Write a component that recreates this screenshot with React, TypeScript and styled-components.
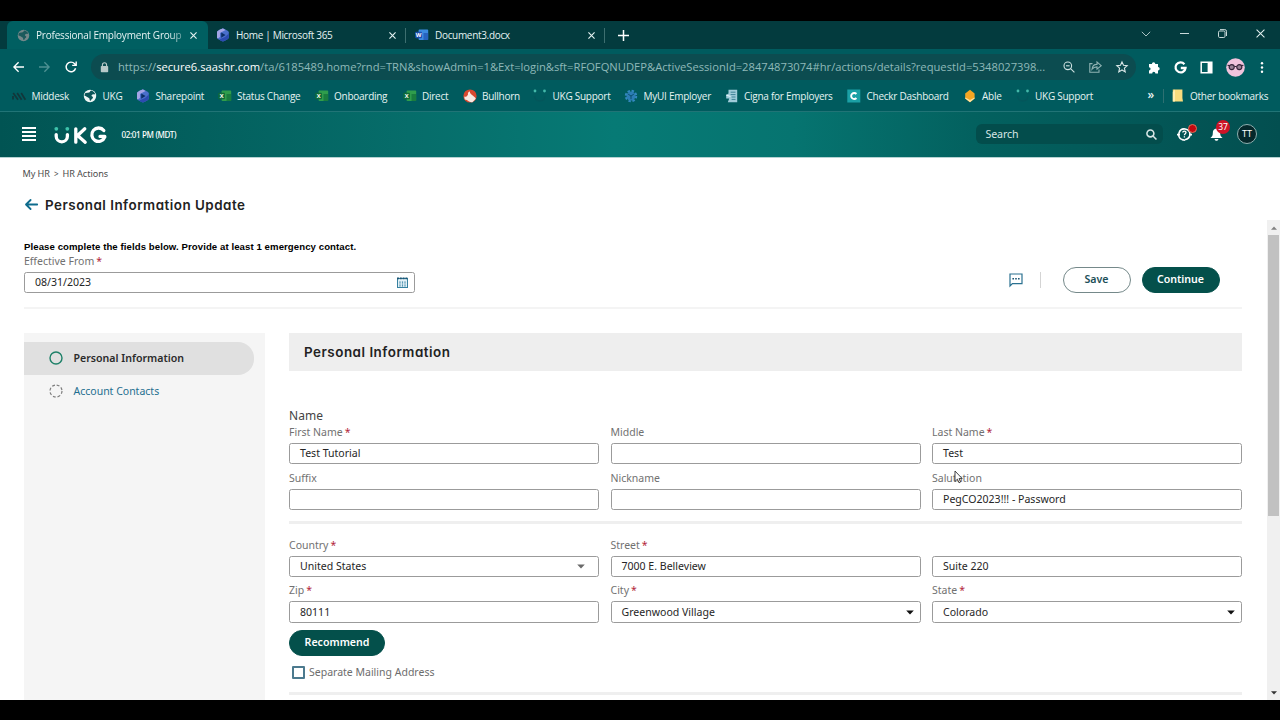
import React from "react";
import styled, { createGlobalStyle, css } from "styled-components";

const GlobalStyle = createGlobalStyle`
  * { box-sizing: border-box; }
  html, body { margin: 0; padding: 0; background: #000; }
  body { width: 1280px; height: 720px; overflow: hidden; font-family: "Noto Sans", sans-serif; }
  svg { display: block; flex: none; overflow: visible; }
`;

const chromeFont = `"Open Sans", "Noto Sans", sans-serif`;

const Screen = styled.div`
  width: 1280px;
  height: 720px;
  padding: 21px 0 20px;
  background: #000;
  display: flex;
  flex-direction: column;
`;

/* ---------- text helper ---------- */
const Text = styled.span<{ $size: number; $ls?: number; $color?: string; $weight?: number }>`
  font-size: ${(p) => p.$size}px;
  letter-spacing: ${(p) => p.$ls ?? 0}px;
  color: ${(p) => p.$color ?? "inherit"};
  font-weight: ${(p) => p.$weight ?? 400};
  white-space: nowrap;
`;

/* ---------- browser chrome ---------- */
const TabStrip = styled.div`
  height: 28px;
  flex: none;
  display: flex;
  padding-left: 7px;
  background: #033b3e;
  color: #e4f2f2;
  font-family: ${chromeFont};
`;

const Tab = styled.div<{ $active?: boolean; $divided?: boolean }>`
  width: ${(p) => (p.$active ? 201 : 199)}px;
  height: 28px;
  padding: 0 11px 0 ${(p) => (p.$active ? 10 : 8)}px;
  display: flex;
  align-items: center;
  gap: 6px;
  position: relative;
  ${(p) => p.$active && css`background: #005f61; border-radius: 6px 6px 0 0;`}
  ${(p) =>
    p.$divided &&
    css`
      &::after {
        content: "";
        position: absolute;
        right: 1px;
        top: 7px;
        width: 1px;
        height: 15px;
        background: #3d6f70;
      }
    `}
`;

const TabTitle = styled(Text)<{ $fade?: boolean }>`
  flex: 1;
  ${(p) => p.$fade && css`mask-image: linear-gradient(90deg, #000 90%, rgba(0, 0, 0, 0.35) 100%);`}
`;

const NewTab = styled.div`
  display: flex;
  align-items: center;
  padding-left: 12px;
  flex: 1;
`;

const WindowButtons = styled.div`
  display: flex;
  align-items: center;
  gap: 29px;
  padding: 0 15px 3px 0;
`;

const Toolbar = styled.div`
  height: 34px;
  flex: none;
  display: flex;
  align-items: center;
  padding: 2px 14px 0 13px;
  background: #005b5e;
  color: #fff;
  font-family: ${chromeFont};
`;

const NavButtons = styled.div`
  width: 78px;
  display: flex;
  gap: 15px;
`;

const AddressBar = styled.div`
  width: 1045px;
  height: 26px;
  border-radius: 13px;
  padding: 0 8px 0 9px;
  display: flex;
  align-items: center;
  background: #0c4c50;
  color: #8fb9b9;
`;

const Url = styled(Text)`
  margin-left: 9px;
  flex: 1;
  line-height: 16px;
  padding-bottom: 1px;
  b { font-weight: 400; color: #fff; }
`;

const AddressIcons = styled.div`
  display: flex;
  align-items: center;
  gap: 14px;
  color: #cfe2e2;
`;

const Extensions = styled.div`
  flex: 1;
  display: flex;
  align-items: center;
  gap: 13px;
  padding-left: 12.5px;
`;

const BookmarkBar = styled.div`
  height: 29px;
  flex: none;
  display: flex;
  align-items: center;
  padding: 0 0 3px 12px;
  border-bottom: 1px solid #217476;
  background: #005b5e;
  color: #e6f3f2;
  font-family: ${chromeFont};
`;

const Bookmark = styled.div<{ $w: number }>`
  width: ${(p) => p.$w}px;
  flex: none;
  display: flex;
  align-items: center;
  gap: 5.5px;
`;

const Overflow = styled.div`
  width: 16px;
  border-right: 1px solid #2d7072;
  height: 14px;
  line-height: 12px;
  display: flex;
  margin-right: 8px;
`;

/* ---------- application header ---------- */
const AppHeader = styled.header`
  height: 45px;
  flex: none;
  display: flex;
  align-items: center;
  padding: 0 23px 1px 22px;
  background: linear-gradient(90deg, #015453 0%, #03605e 16%, #066d6a 32%, #067a75 48%, #067470 62%, #03615f 76%, #034f50 100%);
  color: #fff;
`;

const Logo = styled.svg`margin: 3px 15px 0 17.5px;`;

const SearchBox = styled.div`
  margin-left: auto;
  width: 187px;
  height: 20px;
  border-radius: 6px;
  background: #034d4c;
  display: flex;
  align-items: center;
  justify-content: space-between;
  padding: 0 6px 0 10px;
  color: #d7e6e5;
`;

const HeaderIcon = styled.div<{ $ml: number }>`
  position: relative;
  margin-left: ${(p) => p.$ml}px;
`;

const Dot = styled.span`
  position: absolute;
  top: -3px;
  right: -5px;
  width: 9px;
  height: 9px;
  border-radius: 50%;
  background: #c2080f;
  border: 1px solid #e0705c;
`;

const Count = styled.span`
  position: absolute;
  top: -7px;
  right: -7px;
  width: 14px;
  height: 14px;
  border-radius: 50%;
  background: #cd1427;
  font-size: 8.5px;
  line-height: 14px;
  text-align: center;
`;

const Avatar = styled.div`
  margin-left: 14px;
  width: 20px;
  height: 20px;
  border-radius: 50%;
  border: 1px solid #8fb0b0;
  background: #05282b;
  font-size: 9px;
  line-height: 17px;
  text-align: center;
`;

/* ---------- page ---------- */
const Page = styled.main`
  flex: 1;
  min-height: 0;
  background: #fff;
  border-top: 1px solid #b5d2d2;
  display: flex;
  flex-direction: column;
`;

const Breadcrumb = styled.nav`
  height: 31px;
  padding: 0 0 0 22.5px;
  display: flex;
  align-items: center;
  gap: 4px;
  color: #4c4c4c;
  flex: none;
`;

const TitleRow = styled.div`
  height: 31px;
  flex: none;
  display: flex;
  align-items: center;
  gap: 7px;
  padding: 0 0 0 25px;
`;

const Heading = styled.h1<{ $size: number; $ls: number }>`
  margin: 0;
  font-family: Inter, sans-serif;
  font-feature-settings: "cv11", "ss03";
  font-weight: 600;
  font-size: ${(p) => p.$size}px;
  letter-spacing: ${(p) => p.$ls}px;
  line-height: 20px;
  color: #222;
  white-space: nowrap;
`;

const ScrollPane = styled.div`
  flex: 1;
  min-height: 0;
  display: flex;
`;

const PaneBody = styled.div`
  flex: 1;
  min-width: 0;
  padding: 0 25px 0 24px;
  display: flex;
  flex-direction: column;
  overflow: hidden;
`;

const ScrollTrack = styled.div`
  width: 13px;
  background: #f0f0f0;
  display: flex;
  flex-direction: column;
  align-items: center;
`;

const ScrollArrow = styled.div`
  height: 15px;
  display: flex;
  align-items: center;
`;

const ScrollThumb = styled.div`
  width: 11px;
  height: 281px;
  background: #c1c1c1;
  margin-bottom: auto;
`;

const ActionRow = styled.div`
  height: 89px;
  flex: none;
  display: flex;
  justify-content: space-between;
  border-bottom: 2px solid #f4f4f4;
  padding-right: 22.5px;
`;

const EffectiveBlock = styled.div`
  width: 391px;
  padding-top: 18px;
`;

const Notice = styled.div`
  font-family: "Liberation Sans", sans-serif;
  font-weight: 700;
  font-size: 9.6px;
  letter-spacing: 0.08px;
  line-height: 16px;
  height: 17px;
  padding-top: 1px;
  color: #000;
  white-space: nowrap;
`;

const Actions = styled.div`
  display: flex;
  align-items: center;
  padding-top: 32px;
`;

const ActionDivider = styled.div`
  width: 1px;
  height: 16px;
  background: #d4d4d4;
  margin: 0 22px 0 17px;
`;

const ButtonPair = styled.div`
  display: flex;
  gap: 11px;
`;

const Pill = styled.div<{ $w: number; $outline?: boolean }>`
  width: ${(p) => p.$w}px;
  height: 26px;
  border-radius: 13px;
  border: 1px solid ${(p) => (p.$outline ? "#75898a" : "#04504b")};
  background: ${(p) => (p.$outline ? "#fff" : "#04504b")};
  color: ${(p) => (p.$outline ? "#1d5059" : "#fff")};
  display: flex;
  align-items: center;
  justify-content: center;
  font-size: 10.6px;
  font-weight: 600;
  line-height: 24px;
  padding-bottom: 2px;
  flex: none;
`;

const Columns = styled.div`
  flex: 1;
  min-height: 0;
  display: flex;
  gap: 24px;
  padding-top: 24px;
`;

const SideNav = styled.aside`
  width: 241px;
  background: #f5f5f5;
  padding-top: 9px;
`;

const SideItem = styled.div<{ $active?: boolean }>`
  width: 230px;
  height: 33px;
  padding: 0 0 1px 24.5px;
  display: flex;
  align-items: center;
  gap: 11px;
  ${(p) => p.$active && css`background: #e0e0e0; border-radius: 0 16px 16px 0;`}
`;

const Form = styled.section`
  flex: 1;
  min-width: 0;
`;

const SectionBar = styled.div`
  height: 38px;
  background: #eee;
  padding: 9px 0 0 15px;
`;

const GroupTitle = styled.div`
  margin-top: 36px;
  height: 18px;
  line-height: 18px;
  font-size: 12px;
  letter-spacing: 0.05px;
  color: #444;
`;

const FieldGrid = styled.div<{ $gap: number }>`
  display: grid;
  grid-template-columns: repeat(3, 310px);
  column-gap: 11.5px;
  row-gap: ${(p) => p.$gap}px;
`;

const Label = styled.div<{ $h?: number; $lh?: number }>`
  height: ${(p) => p.$h ?? 18}px;
  line-height: ${(p) => p.$lh ?? 15}px;
  font-size: 10.5px;
  color: #717171;
  white-space: nowrap;
`;

const Star = styled.span`
  margin-left: 2px;
  color: #b3263a;
`;

const Box = styled.div<{ $pr?: number; $tall?: boolean }>`
  height: ${(p) => (p.$tall ? 22 : 21)}px;
  border: 1px solid #9b9b9b;
  border-radius: 2.5px;
  background: #fff;
  padding: 0 ${(p) => p.$pr ?? 6}px 0 10px;
  display: flex;
  align-items: center;
  justify-content: space-between;
  font-size: 10.55px;
  line-height: 19px;
  color: #262626;
  white-space: nowrap;
`;

const Rule = styled.div<{ $mt: number; $mb: number }>`
  height: 3px;
  background: #efefef;
  margin: ${(p) => p.$mt}px 0 ${(p) => p.$mb}px;
`;

const FormFooter = styled.div`
  padding-top: 7px;
`;

const CheckRow = styled.div`
  display: flex;
  align-items: center;
  gap: 4px;
  height: 20px;
  margin: 6px 0 0 3px;
`;

const Checkbox = styled.span`
  width: 13px;
  height: 13px;
  border: 2px solid #4c7a8e;
  border-radius: 1px;
`;

const Pointer = styled.svg`
  position: absolute;
  left: 954px;
  top: 470px;
`;

/* ---------- icons ---------- */
const CloseIcon = ({ s = 7, w = 1.3 }: { s?: number; w?: number }) => (
  <svg width={s} height={s} viewBox="0 0 8 8" stroke="currentColor" strokeWidth={w}>
    <path d="M0.5 .5L7.5 7.5M7.5 .5L.5 7.5" />
  </svg>
);

const Globe = ({ size, fg, bg }: { size: number; fg: string; bg: string }) => (
  <svg width={size} height={size} viewBox="0 0 14 14">
    <circle cx="7" cy="7" r="6.2" fill={bg} />
    <path d="M2 4.5C3.6 3.2 5 4 6.2 3.6 7.5 3 6.6 2 8.2 1.6 10.8 2.3 12 4 12.2 5.4 10.5 5 9.2 5.2 8.6 6.2 8 7.4 9.8 7.2 10 8.4 10 9.6 8.4 9.6 8.2 11 7.6 12.4 6.4 11.6 6.6 10.2 6.8 8.8 5.2 9 4.2 8 3.2 7.2 1.8 7 1.4 6.6Z" fill={fg} />
  </svg>
);

const Microsoft365 = ({ size = 13 }: { size?: number }) => (
  <svg width={size} height={size} viewBox="0 0 14 14">
    <path d="M7 .6C8 .6 12.8 3.2 12.8 4.2V9.8C12.8 11 8 13.4 7 13.4C6 13.4 1 11 1 9.8V4.2C1 3.2 6 .6 7 .6Z" fill="#4a6fcb" />
    <path d="M7 .6C5.4 .6 1 3 1 4.2V9.8C1 10.8 2.4 10.4 4 9V5L9.6 2Z" fill="#a3a4e6" />
    <path d="M12.8 5.5V9.8C12.8 11 8 13.4 7 13.4C6 13.4 4.2 12.4 3.2 11.4L9 9Z" fill="#2c4bb0" />
    <path d="M5.2 4.4L9.6 7L5.2 9.8Z" fill="#0d2f66" />
  </svg>
);

const OfficeFile = ({ letter, dark, light }: { letter: string; dark: string; light: string }) => (
  <svg width="14" height="14" viewBox="0 0 14 14">
    <rect x="3.6" y="1.6" width="9.6" height="10.4" rx="0.8" fill={light} />
    <rect x="8.5" y="5" width="4.7" height="7" fill={dark} opacity="0.65" />
    <rect x="0.3" y="3.7" width="6.6" height="6.6" rx="0.8" fill={dark} />
    <text x="3.6" y="9.1" fontSize="5.8" fontWeight="700" fontFamily="Open Sans, sans-serif" fill="#fff" textAnchor="middle">{letter}</text>
  </svg>
);

const MiddeskIcon = () => (
  <svg width="14" height="14" viewBox="0 0 14 14" stroke="#12363a" strokeWidth="1.7" fill="none">
    <path d="M1 7V10.5M1.2 4L6 10.8M5.2 4L9.6 10.8M9.2 4L13.4 10.8" />
  </svg>
);

const BullhornIcon = () => (
  <svg width="14" height="14" viewBox="0 0 14 14">
    <circle cx="7" cy="7" r="6.6" fill="#d9482f" />
    <path d="M1.2 7.6C3 8.4 4 7.2 5 5.4C4.6 4 5.4 2.8 7 2.6C6.6 4.4 8 5 9 6C10.4 7.2 12 8 12.8 9.8L9.4 13.2C6 13.8 5.4 11 1.8 10.6Z" fill="#f8e9e2" />
  </svg>
);

const DotsIcon = () => (
  <svg width="14" height="14" viewBox="0 0 14 14" fill="#43b8a9">
    <circle cx="2" cy="2" r="1.4" />
    <circle cx="11.5" cy="2" r="1.4" />
    <path d="M1.5 7C2 13.5 11.5 13.5 12 7" fill="none" stroke="#04565b" strokeWidth="1.4" />
  </svg>
);

const GearIcon = () => (
  <svg width="14" height="14" viewBox="0 0 14 14">
    <circle cx="7" cy="7" r="5.2" fill="none" stroke="#3489c1" strokeWidth="2" strokeDasharray="2.4 1.68" />
    <circle cx="7" cy="7" r="4.5" fill="#2c7db5" />
    <path d="M4.2 5.2L7 7L9.8 5.2M7 7V10.2" stroke="#0a4f6e" strokeWidth="1" fill="none" />
  </svg>
);

const CignaIcon = () => (
  <svg width="14" height="14" viewBox="0 0 14 14">
    <path d="M3.5 .8H12.2V13.2H2.8L4.2 9.5H1.2V6L3.5 4.5Z" fill="#9fcbd9" />
    <path d="M5.6 3.2H10.5M5.6 5.6H10.5M6.6 8H10.5M6.6 10.4H10.5" stroke="#3d8196" strokeWidth="1" />
    <path d="M1.2 6L5.5 7.5" stroke="#dff2f7" strokeWidth="1.2" />
  </svg>
);

const CheckrIcon = () => (
  <svg width="14" height="14" viewBox="0 0 14 14">
    <rect x=".3" y=".5" width="13" height="13" fill="#1ba0a5" />
    <path d="M9.4 5A3 3 0 1 0 9.4 9" fill="none" stroke="#fff" strokeWidth="1.9" />
  </svg>
);

const AbleIcon = () => (
  <svg width="14" height="14" viewBox="0 0 14 14">
    <path d="M7 .8L11.6 4.6V9.4L7 13.2L2.2 9.4V4.6Z" fill="#f6a623" />
    <path d="M2.2 8.6L7 11L11.6 8.6V9.6L7 13.2L2.2 9.6Z" fill="#ffe2a0" />
  </svg>
);

const SearchGlyph = ({ size = 12, w = 1.4, minus = false }: { size?: number; w?: number; minus?: boolean }) => (
  <svg width={size} height={size} viewBox="0 0 12 12" fill="none" stroke="currentColor" strokeWidth={w}>
    <circle cx="4.8" cy="4.8" r="3.8" />
    <path d="M7.6 7.6L11.4 11.4" />
    {minus && <path d="M3 4.8H6.6" />}
  </svg>
);

const CaretDown = ({ color }: { color: string }) => (
  <svg width="8" height="5" viewBox="0 0 8 5">
    <path d="M.2 .5H7.8L4 4.5Z" fill={color} />
  </svg>
);

const bookmarks: { label: string; w: number; ls?: number; icon: React.ReactNode }[] = [
  { label: "Middesk", w: 71, icon: <MiddeskIcon /> },
  { label: "UKG", w: 53, icon: <Globe size={14} fg="#0b5558" bg="#eef6f5" /> },
  { label: "Sharepoint", w: 81.5, icon: <Microsoft365 size={14} /> },
  { label: "Status Change", w: 97, icon: <OfficeFile letter="X" dark="#0f6b38" light="#2f9d4c" /> },
  { label: "Onboarding", w: 88, icon: <OfficeFile letter="X" dark="#0f6b38" light="#2f9d4c" /> },
  { label: "Direct", w: 60, icon: <OfficeFile letter="X" dark="#0f6b38" light="#2f9d4c" /> },
  { label: "Bullhorn", w: 70.5, icon: <BullhornIcon /> },
  { label: "UKG Support", w: 91, icon: <DotsIcon /> },
  { label: "MyUI Employer", w: 100.5, icon: <GearIcon /> },
  { label: "Cigna for Employers", w: 122.5, icon: <CignaIcon /> },
  { label: "Checkr Dashboard", w: 115.5, icon: <CheckrIcon /> },
  { label: "Able", w: 53, icon: <AbleIcon /> },
  { label: "UKG Support", w: 132, icon: <DotsIcon /> },
];

type FieldProps = { label?: string; required?: boolean; value?: string; caret?: string; pr?: number; tall?: boolean };

const Field = ({ label, required, value, caret, pr, tall }: FieldProps) => (
  <div>
    <Label>
      {label}
      {required && <Star>*</Star>}
    </Label>
    <Box $pr={pr} $tall={tall}>
      <span>{value}</span>
      {caret && <CaretDown color={caret} />}
    </Box>
  </div>
);

const BrowserChrome = () => (
  <>
    <TabStrip>
      <Tab $active>
        <Globe size={13} fg="#1b5a5c" bg="#74888a" />
        <TabTitle $size={10} $ls={-0.2} $fade>Professional Employment Group</TabTitle>
        <CloseIcon />
      </Tab>
      <Tab $divided>
        <Microsoft365 size={14} />
        <TabTitle $size={10} $ls={-0.32}>Home | Microsoft 365</TabTitle>
        <CloseIcon />
      </Tab>
      <Tab $divided>
        <OfficeFile letter="W" dark="#1b4fae" light="#3c8be0" />
        <TabTitle $size={10} $ls={-0.32}>Document3.docx</TabTitle>
        <CloseIcon />
      </Tab>
      <NewTab>
        <svg width="11" height="11" viewBox="0 0 11 11" stroke="#fff" strokeWidth="1.5"><path d="M5.5 0V11M0 5.5H11" /></svg>
      </NewTab>
      <WindowButtons>
        <svg width="10" height="6" viewBox="0 0 10 6" fill="none" stroke="#a9c2c3" strokeWidth="1"><path d="M.8 .8L5 5L9.2 .8" /></svg>
        <svg width="9" height="2" viewBox="0 0 9 2" stroke="#c9dada" strokeWidth="1"><path d="M0 .5H9" /></svg>
        <svg width="9" height="9" viewBox="0 0 9 9" fill="none" stroke="#c9dada" strokeWidth="1">
          <rect x=".5" y="2" width="6.5" height="6.5" rx="1.2" /><path d="M2 .6H6.8A1.7 1.7 0 0 1 8.5 2.3V7" />
        </svg>
        <CloseIcon s={9} w={0.9} />
      </WindowButtons>
    </TabStrip>
    <Toolbar>
      <NavButtons>
        <svg width="11" height="12" viewBox="0 0 11 12" fill="none" stroke="#fff" strokeWidth="1.3"><path d="M11 6H1M5.6 1.2L.9 6L5.6 10.8" /></svg>
        <svg width="11" height="12" viewBox="0 0 11 12" fill="none" stroke="#4d9193" strokeWidth="1.3"><path d="M0 6H10M5.4 1.2L10.1 6L5.4 10.8" /></svg>
        <svg width="12" height="12" viewBox="0 0 12 12" fill="none" stroke="#fff" strokeWidth="1.4"><path d="M10.6 7.2A4.8 4.8 0 1 1 9.6 2.8L11 4.2M11.2 .4V4.4H7.2" /></svg>
      </NavButtons>
      <AddressBar>
        <svg width="9" height="11" viewBox="0 0 9 11"><rect x=".8" y="4" width="7.4" height="6.2" rx=".8" fill="#b9c9c9" /><path d="M2.4 4.4V2.9A2.1 2.1 0 0 1 6.6 2.9V4.4" fill="none" stroke="#b9c9c9" strokeWidth="1.1" /></svg>
        <Url $size={11.2}>
          https://<b>secure6.saashr.com</b>/ta/6185489.home?rnd=TRN&amp;showAdmin=1&amp;Ext=login&amp;sft=RFOFQNUDEP&amp;ActiveSessionId=28474873074#hr/actions/details?requestId=5348027398...
        </Url>
        <AddressIcons>
          <SearchGlyph size={12} w={1.1} minus />
          <svg width="13" height="12" viewBox="0 0 13 12" fill="none" stroke="#8fb3b3" strokeWidth="1.1"><path d="M3.5 2.6H.8V11.2H10V8.6M3 8.2C3.4 5 5.6 3.4 8 3.4V1L12.2 4.7L8 8.2V5.9C6 5.9 4.4 6.4 3 8.2Z" /></svg>
          <svg width="12" height="12" viewBox="0 0 12 12" fill="none" stroke="#dce9e9" strokeWidth="1.1"><path d="M6 .9L7.5 4.3L11.2 4.7L8.4 7.2L9.2 10.9L6 9L2.8 10.9L3.6 7.2L.8 4.7L4.5 4.3Z" /></svg>
        </AddressIcons>
      </AddressBar>
      <Extensions>
        <svg width="13" height="13" viewBox="0 0 13 13" fill="#fff"><path d="M1 3H3.9A1.7 1.7 0 1 1 7.3 3H10V6A1.7 1.7 0 1 1 10 9.4V12.4H7.4A1.6 1.6 0 0 0 4.2 12.4H1V9.4A1.6 1.6 0 0 0 1 6.2Z" /></svg>
        <svg width="13" height="13" viewBox="0 0 13 13" fill="none" stroke="#fff" strokeWidth="2.3"><path d="M10.4 3.2A5 5 0 1 0 11.5 7H6.8" /></svg>
        <svg width="13" height="13" viewBox="0 0 13 13"><path d="M1.2 1.2H11.8V11.8H1.2Z" fill="none" stroke="#fff" strokeWidth="1.5" /><rect x="7.6" y="1" width="4.4" height="11" fill="#fff" /></svg>
        <svg width="19" height="19" viewBox="0 0 20 20">
          <circle cx="10" cy="10" r="9.8" fill="#f0c3dc" />
          <circle cx="6" cy="9.6" r="2.7" fill="#9a8296" stroke="#35243a" strokeWidth="1.2" />
          <circle cx="14" cy="9.6" r="2.7" fill="#9a8296" stroke="#35243a" strokeWidth="1.2" />
          <path d="M1.6 7.6L4 8M18.4 7.6L16 8M8.8 9H11.2" stroke="#35243a" strokeWidth="1.2" />
        </svg>
        <svg width="8" height="13" viewBox="0 0 8 13" fill="#fff"><circle cx="4" cy="2.2" r="1.2" /><circle cx="4" cy="6.5" r="1.2" /><circle cx="4" cy="10.8" r="1.2" /></svg>
      </Extensions>
    </Toolbar>
    <BookmarkBar>
      {bookmarks.map((b, i) => (
        <Bookmark key={i} $w={b.w}>
          {b.icon}
          <Text $size={10} $ls={-0.26}>{b.label}</Text>
        </Bookmark>
      ))}
      <Overflow><Text $size={12} $weight={600}>»</Text></Overflow>
      <Bookmark $w={100}>
        <svg width="13" height="13" viewBox="0 0 13 13"><path d="M.8 .5H10.4V9L11 12.5H.8Z" fill="#f9dc7d" /><path d="M.8 3L3 .5V12.5H.8Z" fill="#ffeeb0" /></svg>
        <Text $size={10} $ls={-0.26}>Other bookmarks</Text>
      </Bookmark>
    </BookmarkBar>
  </>
);

const Header = () => (
  <AppHeader>
    <svg width="14" height="14" viewBox="0 0 14 14" fill="#fff"><rect y="0" width="14" height="2" /><rect y="4" width="14" height="2" /><rect y="8" width="14" height="2" /><rect y="12" width="14" height="2" /></svg>
    <Logo width="53" height="18" viewBox="0 0 53 18" fill="none" stroke="#fff" strokeWidth="3.3" strokeLinecap="round" strokeLinejoin="round">
      <path d="M2.2 7.6V9.2A5.6 5.6 0 0 0 13.4 9.2V7.6" />
      <path d="M21.8 1.8V15.2M30.8 1.8L23.6 8.5L31.2 15.2" />
      <path d="M49.8 3.6A6.7 6.7 0 1 0 50.8 10V9.4H46" />
      <circle cx="2.3" cy="1.8" r="1.9" fill="#3ec3ab" stroke="none" />
      <circle cx="13.3" cy="1.8" r="1.9" fill="#3ec3ab" stroke="none" />
    </Logo>
    <Text $size={8.1} $ls={-0.38} $weight={500}>02:01 PM (MDT)</Text>
    <SearchBox>
      <Text $size={10.6} $ls={-0.1}>Search</Text>
      <SearchGlyph size={11} w={1.7} />
    </SearchBox>
    <HeaderIcon $ml={14}>
      <svg width="15" height="14" viewBox="0 0 15 14" fill="none" stroke="#fff" strokeWidth="1.6">
        <path d="M5 12.6A5.6 5.6 0 1 1 13 7.4C12.8 10 11 12 8 12.8" />
        <path d="M0 7.6H3M12 7.6H15M5 12.6L8 13.2" />
        <path d="M5.8 5.6C5.8 3.6 9 3.6 9 5.6C9 6.8 7.4 6.8 7.4 8.2M7.4 9.3V10.4" strokeWidth="1.3" />
      </svg>
      <Dot />
    </HeaderIcon>
    <HeaderIcon $ml={18.5}>
      <svg width="13" height="14" viewBox="0 0 13 14" fill="#fff"><path d="M6.5 1.6C9.2 2 10.2 3.6 10.2 6.2C10.2 8.8 11 9.6 12.6 11H.4C2 9.6 2.8 8.8 2.8 6.2C2.8 3.6 3.8 2 6.5 1.6ZM4.6 12H8.4C8.4 14.4 4.6 14.4 4.6 12Z" /></svg>
      <Count>37</Count>
    </HeaderIcon>
    <Avatar>TT</Avatar>
  </AppHeader>
);

const App = () => (
  <Screen>
    <GlobalStyle />
    <BrowserChrome />
    <Header />
    <Page>
      <Breadcrumb>
        <Text $size={9.1} $ls={-0.05}>My HR</Text>
        <Text $size={8}>&gt;</Text>
        <Text $size={9.1} $ls={-0.05}>HR Actions</Text>
      </Breadcrumb>
      <TitleRow>
        <svg width="13" height="11" viewBox="0 0 13 11" fill="none" stroke="#0f6c8d" strokeWidth="1.8" strokeLinecap="round" strokeLinejoin="round"><path d="M12.2 5.5H1.2M5.6 1L1 5.5L5.6 10" /></svg>
        <Heading $size={13.4} $ls={0.5}>Personal Information Update</Heading>
      </TitleRow>
      <ScrollPane>
        <PaneBody>
          <ActionRow>
            <EffectiveBlock>
              <Notice>Please complete the fields below. Provide at least 1 emergency contact.</Notice>
              <Label $h={17} $lh={13}>Effective From<Star>*</Star></Label>
              <Box $pr={6}>
                <span>08/31/2023</span>
                <svg width="11" height="11" viewBox="0 0 11 11">
                  <rect x=".5" y="1.5" width="10" height="9" fill="#e3f1f7" stroke="#3681a0" />
                  <path d="M0 1.4H11" stroke="#1c5674" strokeWidth="1.8" strokeDasharray="2 .8" />
                  <path d="M3 4.6V9.6M5.5 4.6V9.6M8 4.6V9.6" stroke="#2f7d9f" strokeWidth="1.2" strokeDasharray="1.2 .6" />
                </svg>
              </Box>
            </EffectiveBlock>
            <Actions>
              <svg width="14" height="14" viewBox="0 0 14 14"><path d="M1 13V1H13V10.6H3.4Z" fill="none" stroke="#2a7190" strokeWidth="1.2" /><path d="M3.4 5.8H10.8" stroke="#1c5674" strokeWidth="1.6" strokeDasharray="1.6 1.2" /></svg>
              <ActionDivider />
              <ButtonPair>
                <Pill $w={68} $outline>Save</Pill>
                <Pill $w={78}>Continue</Pill>
              </ButtonPair>
            </Actions>
          </ActionRow>
          <Columns>
            <SideNav>
              <SideItem $active>
                <svg width="14" height="14" viewBox="0 0 14 14"><circle cx="7" cy="7" r="6" fill="none" stroke="#1d8068" strokeWidth="1.4" /></svg>
                <Text $size={10.6} $weight={600} $color="#2b2b2b">Personal Information</Text>
              </SideItem>
              <SideItem>
                <svg width="14" height="14" viewBox="0 0 14 14"><circle cx="7" cy="7" r="6" fill="none" stroke="#7d7d7d" strokeWidth="1.2" strokeDasharray="2.9 1.81" /></svg>
                <Text $size={10.5} $color="#1f6f90">Account Contacts</Text>
              </SideItem>
            </SideNav>
            <Form>
              <SectionBar><Heading as="h2" $size={13.4} $ls={0.52}>Personal Information</Heading></SectionBar>
              <GroupTitle>Name</GroupTitle>
              <FieldGrid $gap={7}>
                <Field label="First Name" required value="Test Tutorial" />
                <Field label="Middle" />
                <Field label="Last Name" required value="Test" />
                <Field label="Suffix" />
                <Field label="Nickname" />
                <Field label="Salutation" value="PegCO2023!!! - Password" />
              </FieldGrid>
              <Rule $mt={11} $mb={14} />
              <FieldGrid $gap={6}>
                <Field label="Country" required value="United States" caret="#6a6a6a" pr={13} />
                <Field label="Street" required value="7000 E. Belleview" />
                <Field value="Suite 220" />
                <Field label="Zip" required value="80111" tall />
                <Field label="City" required value="Greenwood Village" caret="#111" tall />
                <Field label="State" required value="Colorado" caret="#111" tall />
              </FieldGrid>
              <FormFooter>
                <Pill $w={96}>Recommend</Pill>
                <CheckRow>
                  <Checkbox />
                  <Text $size={10.5} $color="#6d6d6d">Separate Mailing Address</Text>
                </CheckRow>
              </FormFooter>
              <Rule $mt={10} $mb={0} />
            </Form>
          </Columns>
        </PaneBody>
        <ScrollTrack>
          <ScrollArrow><svg width="6" height="4" viewBox="0 0 6 4"><path d="M0 3.8L3 .4L6 3.8Z" fill="#808080" /></svg></ScrollArrow>
          <ScrollThumb />
          <ScrollArrow><svg width="6" height="4" viewBox="0 0 6 4"><path d="M0 .2L3 3.6L6 .2Z" fill="#333" /></svg></ScrollArrow>
        </ScrollTrack>
      </ScrollPane>
    </Page>
    <Pointer width="9" height="14" viewBox="0 0 9 14"><path d="M1 1V11.4L3.4 9.2L5 12.8L6.6 12L5 8.6H8.2Z" fill="#fff" stroke="#333" strokeWidth=".9" /></Pointer>
  </Screen>
);

export default App;
